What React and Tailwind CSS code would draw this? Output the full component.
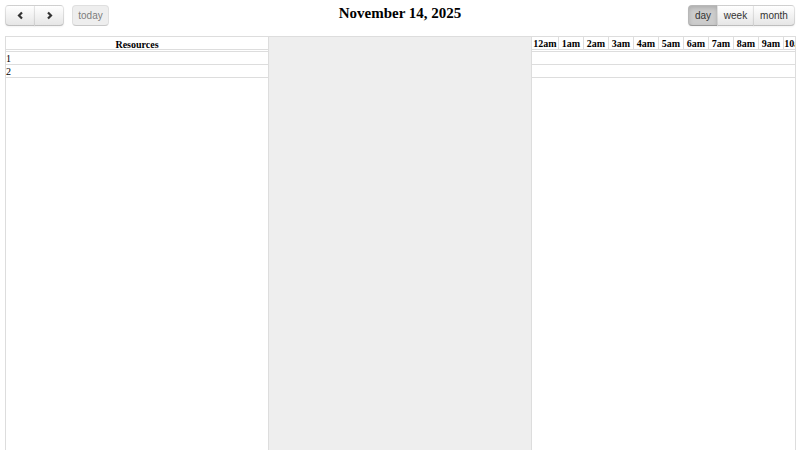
import React from "react";

const serif = { fontFamily: '"Liberation Serif", "Times New Roman", serif' };
const sans = { fontFamily: '"Liberation Sans", Arial, sans-serif' };

function Chevron({ dir }) {
  return (
    <svg width="7" height="9" viewBox="0 0 7 9">
      <polyline
        points={dir === "left" ? "5,1.5 2,4.5 5,7.5" : "2,1.5 5,4.5 2,7.5"}
        fill="none"
        stroke="#333"
        strokeWidth="2.2"
      />
    </svg>
  );
}

const btnBase =
  "h-[21px] flex items-center justify-center text-[10px] text-[#333] border border-black/10 border-b-black/25";
const btnNormal =
  "bg-gradient-to-b from-white to-[#e6e6e6] shadow-[inset_0_1px_0_rgba(255,255,255,0.2),0_1px_2px_rgba(0,0,0,0.05)]";

const hours = ["12am", "1am", "2am", "3am", "4am", "5am", "6am", "7am", "8am", "9am", "10am", "11am"];

export default function App() {
  return (
    <div className="w-[800px] h-[450px] overflow-hidden bg-white flex flex-col" style={serif}>
      {/* toolbar */}
      <div className="flex items-start justify-between pl-[5px] pr-[5px] pt-[5px] h-[36px]" style={sans}>
        <div className="flex items-start w-[200px]">
          <div className="flex">
            <button className={`${btnBase} ${btnNormal} w-[30px] rounded-l-[4px]`}>
              <Chevron dir="left" />
            </button>
            <button className={`${btnBase} ${btnNormal} w-[30px] -ml-px rounded-r-[4px]`}>
              <Chevron dir="right" />
            </button>
          </div>
          <button className={`${btnBase} ml-[8px] w-[37px] rounded-[4px] bg-[#e6e6e6] opacity-65`}>
            today
          </button>
        </div>
        <h2 className="text-[15px] font-bold leading-[17px] text-black" style={serif}>
          November 14, 2025
        </h2>
        <div className="flex w-[200px] justify-end">
          <button className={`${btnBase} w-[30px] rounded-l-[4px] bg-[#cccccc] shadow-[inset_0_2px_4px_rgba(0,0,0,0.15),0_1px_2px_rgba(0,0,0,0.05)]`}>
            day
          </button>
          <button className={`${btnBase} ${btnNormal} w-[37px] -ml-px`}>week</button>
          <button className={`${btnBase} ${btnNormal} w-[42px] -ml-px rounded-r-[4px]`}>month</button>
        </div>
      </div>

      {/* calendar */}
      <div className="ml-[5px] w-[791px] flex-1 flex border-t border-l border-r border-[#dddddd] text-[10px] text-black">
        {/* resources */}
        <div className="w-[263px] border-r border-[#dddddd] flex flex-col">
          <div className="h-[13px] pt-[2px] leading-[12px] text-center font-bold border-b border-[#dddddd] overflow-visible">
            Resources
          </div>
          <div className="h-px" />
          <div className="border-t border-[#dddddd]">
            <div className="h-[13px] pt-[1px] leading-[12px] border-b border-[#dddddd]">1</div>
            <div className="h-[13px] pt-[1px] leading-[12px] border-b border-[#dddddd]">2</div>
          </div>
        </div>
        {/* divider */}
        <div className="w-[263px] bg-[#eeeeee] border-r border-[#dddddd]" />
        {/* timeline */}
        <div className="flex-1 overflow-hidden flex flex-col">
          <div className="h-[13px] flex border-b border-[#dddddd] font-bold">
            {hours.map((h, i) => (
              <div
                key={h}
                className={`${i === 0 ? "w-[27px]" : "w-[25px]"} shrink-0 pt-[1px] leading-[12px] text-center whitespace-nowrap border-r border-[#dddddd]`}
              >
                {h}
              </div>
            ))}
          </div>
          <div className="h-px" />
          <div className="border-t border-[#dddddd]">
            <div className="h-[13px] border-b border-[#dddddd]" />
            <div className="h-[13px] border-b border-[#dddddd]" />
          </div>
        </div>
      </div>
    </div>
  );
}
